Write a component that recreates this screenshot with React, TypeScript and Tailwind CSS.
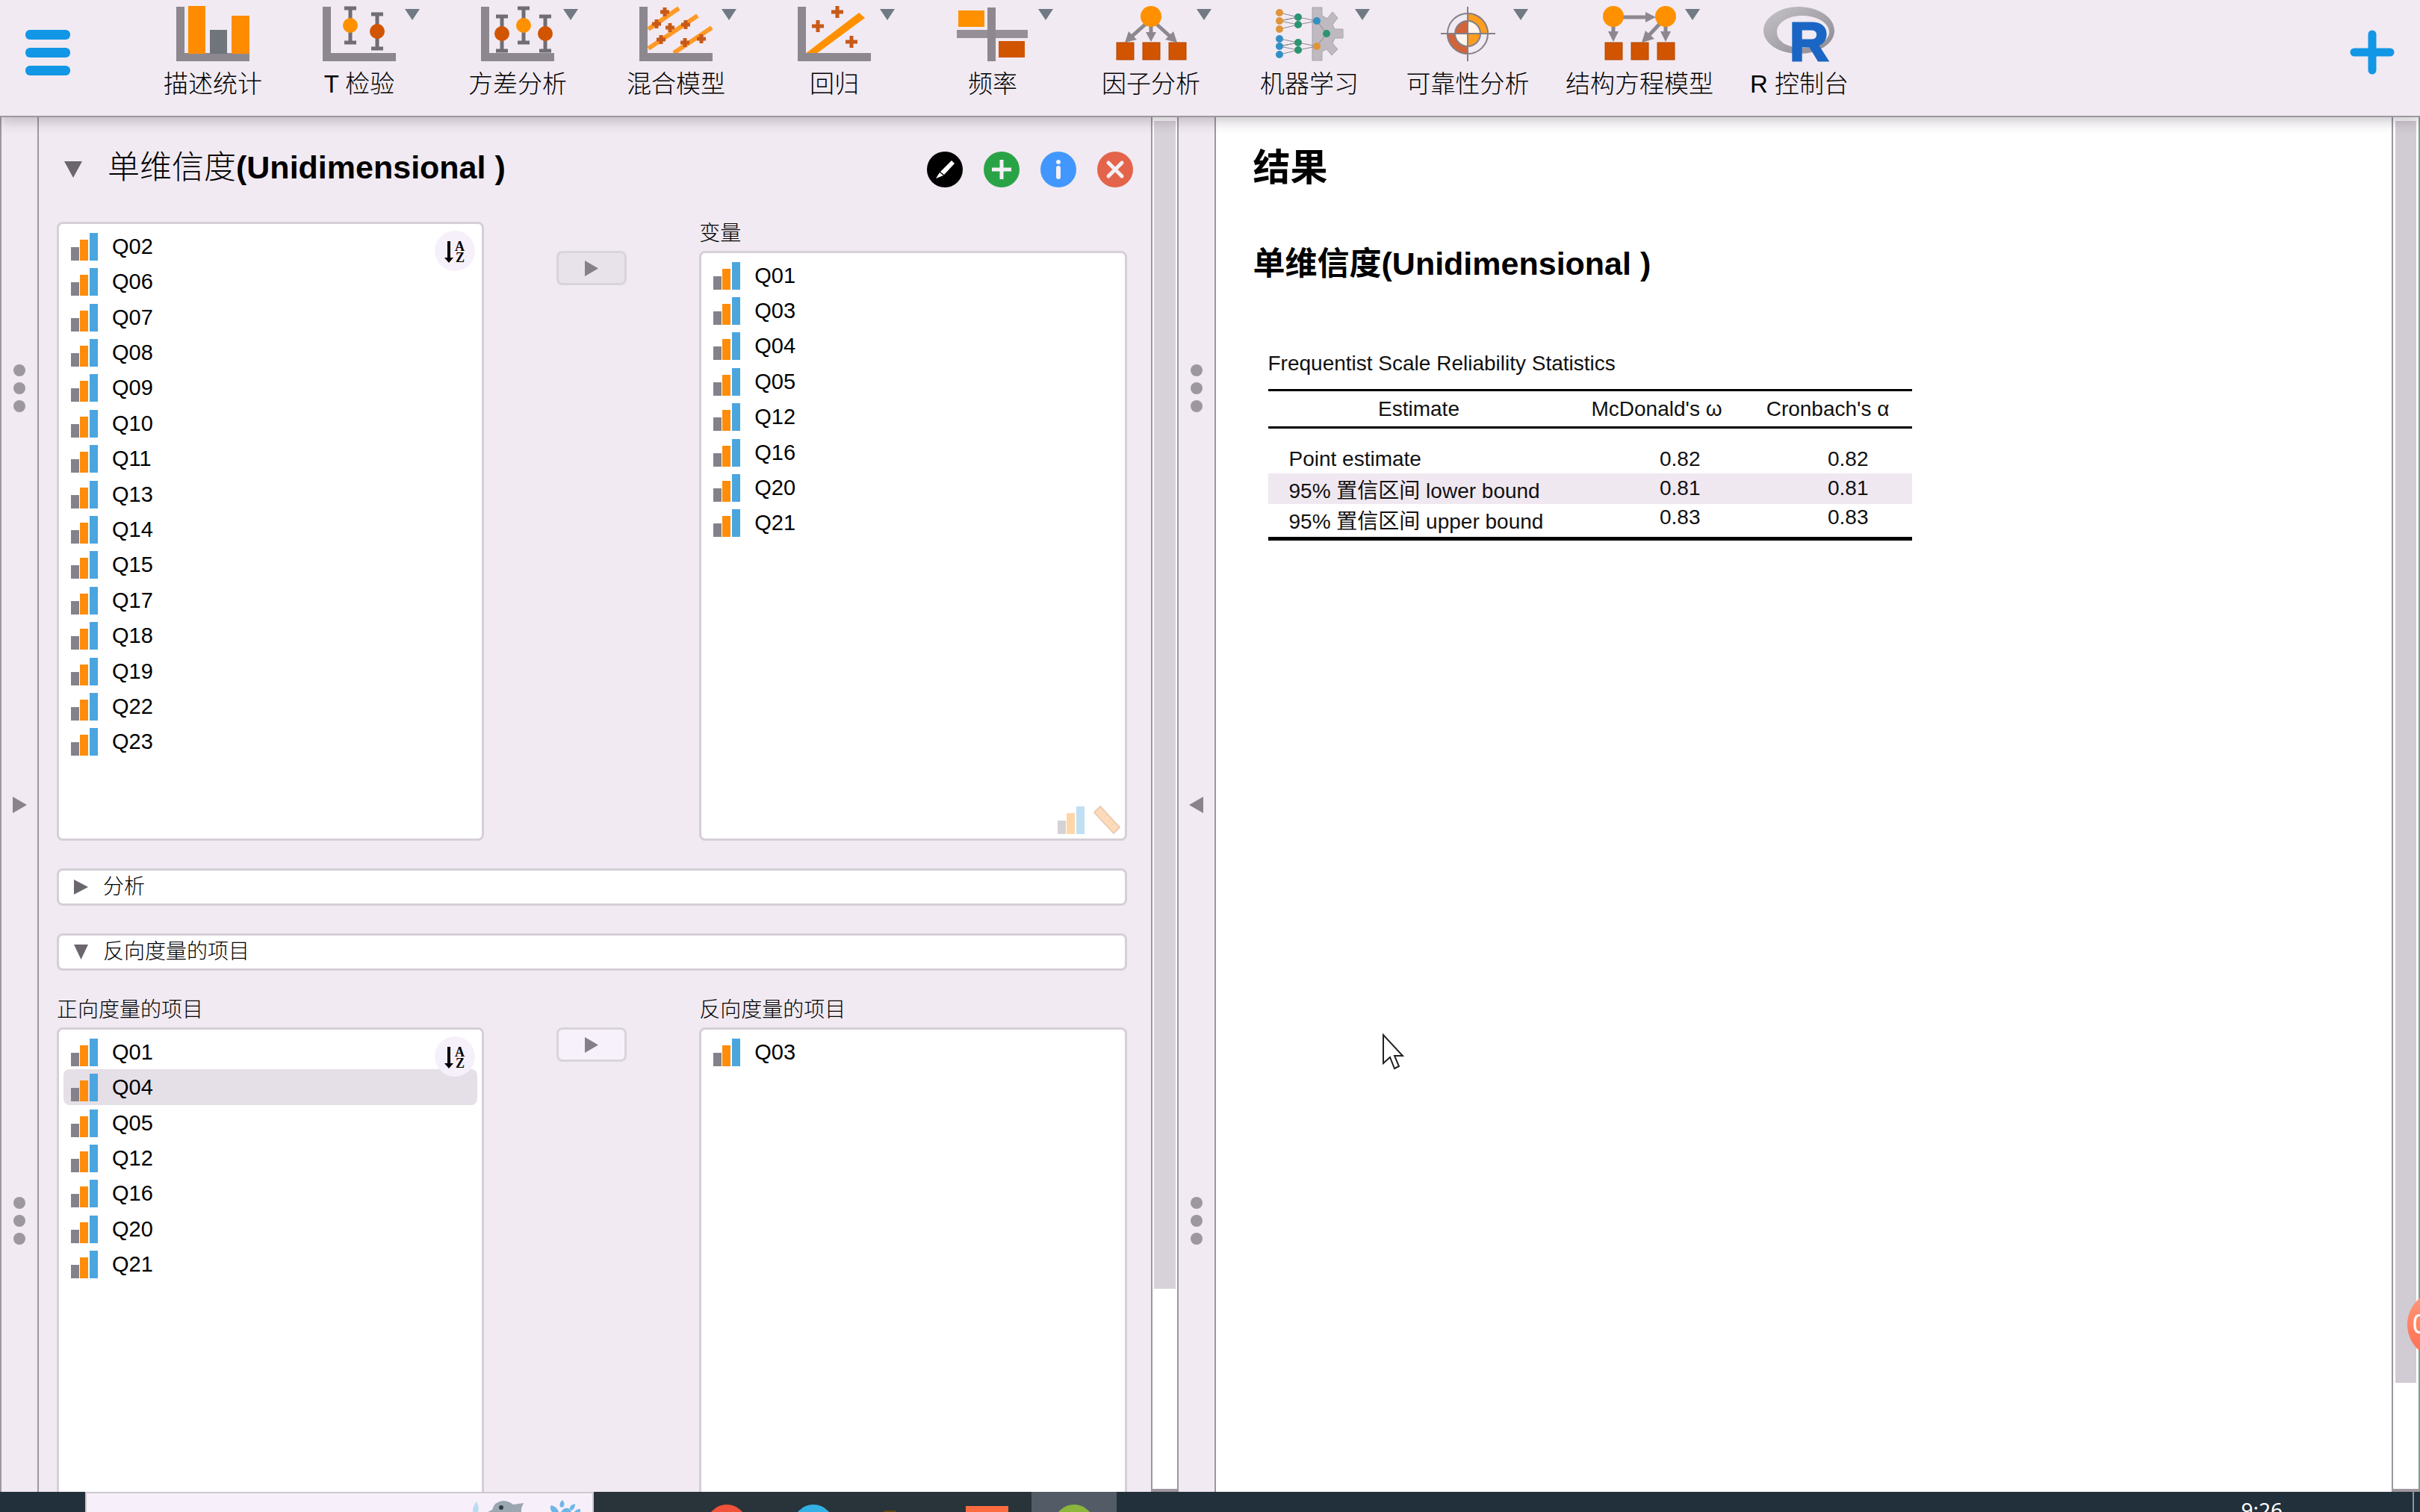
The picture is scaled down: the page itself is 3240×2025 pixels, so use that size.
import React from 'react';

const ORANGE = '#ff9100';
const RUST = '#d15400';
const GREY = '#8d888f';

const Axes = () => <path d="M0 1H11V63H98V74H0Z" fill={GREY} />;

const Whisker = ({ x, y, color }: { x: number; y: number; color: string }) => (
  <g>
    <path d={`M${x} ${y - 24}V${y + 24}M${x - 8} ${y - 23}h16M${x - 8} ${y + 23}h16`} stroke="#716d74" strokeWidth="5" fill="none" />
    <circle cx={x} cy={y} r="10" fill={color} />
  </g>
);

const Plus = ({ x, y, size = 7 }: { x: number; y: number; size?: number }) => (
  <path d={`M${x - size} ${y}h${size * 2}M${x} ${y - size}v${size * 2}`} stroke="#c85a18" strokeWidth="5" fill="none" />
);

const Boxes = () => (
  <g fill={RUST} stroke="#b34700" strokeWidth="1">
    <rect x="3" y="49" width="23" height="23" />
    <rect x="38" y="49" width="23" height="23" />
    <rect x="73" y="49" width="23" height="23" />
  </g>
);

const DescriptivesIcon = () => (
  <>
    <Axes />
    <rect x="16" y="0" width="23" height="64" fill="#ff8c00" />
    <rect x="45" y="32" width="23" height="32" fill="#70757c" />
    <rect x="74" y="13" width="24" height="51" fill="#ff8c00" />
  </>
);

const TTestIcon = () => (
  <>
    <Axes />
    <Whisker x={37} y={26} color={ORANGE} />
    <Whisker x={73} y={34} color={RUST} />
  </>
);

const AnovaIcon = () => (
  <>
    <Axes />
    <Whisker x={28} y={37} color={RUST} />
    <Whisker x={57} y={26} color={ORANGE} />
    <Whisker x={86} y={37} color={RUST} />
  </>
);

const MixedIcon = () => (
  <>
    <path d="M12 31L53 3M12 57L78 13M46 63L97 29" stroke="#ff9a26" strokeWidth="6" />
    <Plus x={34} y={8} size={6} />
    <Plus x={23} y={24} size={6} />
    <Plus x={41} y={29} size={6} />
    <Plus x={62} y={25} size={6} />
    <Plus x={29} y={45} size={6} />
    <Plus x={61} y={49} size={6} />
    <Plus x={83} y={44} size={6} />
    <Axes />
  </>
);

const RegressionIcon = () => (
  <>
    <path d="M10 64L82 9L90 16L25 64Z" fill={ORANGE} />
    <Axes />
    <Plus x={53} y={8} size={8} />
    <Plus x={27} y={27} size={8} />
    <Plus x={72} y={48} size={8} />
  </>
);

const FrequenciesIcon = () => (
  <>
    <path d="M1 32H96V43H1Z" fill="#968f97" />
    <path d="M42 2H53V74H42Z" fill={GREY} />
    <rect x="3" y="6" width="35" height="22" fill={ORANGE} />
    <rect x="57" y="47" width="35" height="22" fill={RUST} />
  </>
);

const FactorIcon = () => (
  <>
    <path d="M42 24L22 42M49 26V38M56 24L76 42" stroke={GREY} strokeWidth="5" />
    <path d="M14 49L19 34L30 45ZM49 48L42 35H56ZM84 49L68 45L79 34Z" fill={GREY} />
    <circle cx="49" cy="14" r="14" fill={ORANGE} />
    <Boxes />
  </>
);

const MachineLearningIcon = () => (
  <>
    <path
      d="M53 2H66V13L73 17L80 8L87 16L80 25L83 31H94V43H83L80 50L87 58L79 66L72 58L66 61V73H53Z"
      fill="#bfb9c0"
      stroke="#a8a2aa"
    />
    <path
      d="M9 9L34 15L9 20L34 25L9 31M9 20L34 15L59 20L34 25M9 44L34 49L9 54L34 59L9 65M9 54L34 49L59 54L34 59M59 20L72 37L59 54"
      stroke="#8d888f"
      strokeWidth="1"
      fill="none"
    />
    {[9, 20, 31].map((y) => <circle key={y} cx="9" cy={y} r="5" fill="#e0953a" />)}
    {[44, 54, 65].map((y) => <circle key={y} cx="9" cy={y} r="5" fill="#3390c4" />)}
    {[15, 25, 49, 59].map((y) => <circle key={y} cx="34" cy={y} r="5" fill="#2c9470" />)}
    <circle cx="59" cy="20" r="5" fill="#3390c4" />
    <circle cx="59" cy="54" r="5" fill="#e0953a" />
    <circle cx="72" cy="37" r="5" fill="#2c9470" />
  </>
);

const ReliabilityIcon = () => (
  <>
    <circle cx="49" cy="37" r="17" fill="#fff5ec" />
    <path d="M49 9A28 28 0 0 1 77 37H66A17 17 0 0 0 49 20Z" fill="#ff9d1e" />
    <path d="M49 37H66A17 17 0 0 1 49 54Z" fill="#ff9d1e" />
    <path d="M49 65A28 28 0 0 1 21 37H32A17 17 0 0 0 49 54Z" fill="#d2643a" />
    <path d="M49 37H32A17 17 0 0 1 49 20Z" fill="#d2643a" />
    <g fill="none" stroke="#857f87" strokeWidth="2">
      <circle cx="49" cy="37" r="27" />
      <circle cx="49" cy="37" r="17" />
      <path d="M13 37H86M49 1V74" />
    </g>
  </>
);

const SemIcon = () => (
  <>
    <path d="M27 15H60M14 26V38M84 26V38M76 24L61 40" stroke={GREY} strokeWidth="5" />
    <path d="M71 15L57 8V22ZM14 48L7 34H21ZM84 48L77 34H91ZM52 49L57 33L69 44Z" fill={GREY} />
    <circle cx="14" cy="14" r="14" fill={ORANGE} />
    <circle cx="84" cy="14" r="14" fill={ORANGE} />
    <Boxes />
  </>
);

const RConsoleIcon = () => (
  <>
    <defs>
      <linearGradient id="ring" x1="0" y1="0" x2="1" y2="1">
        <stop offset="0" stopColor="#c6c3c8" />
        <stop offset="1" stopColor="#8b8890" />
      </linearGradient>
    </defs>
    <path
      fillRule="evenodd"
      fill="url(#ring)"
      d="M48 1C74 1 96 15 96 33S74 64 48 64S1 50 1 33S22 1 48 1ZM53 13C34 13 19 22 19 35S34 56 53 56S89 47 89 35S73 13 53 13Z"
    />
    <text x="36" y="73" fontSize="72" fontWeight="700" fill="#1b66c4" stroke="#1b66c4" strokeWidth="3" fontFamily="Liberation Sans, sans-serif">R</text>
  </>
);

interface RibbonItem {
  label: string;
  Icon: React.ElementType;
  menu: boolean;
  width: string;
}

const ribbon: RibbonItem[] = [
  { label: '描述统计', Icon: DescriptivesIcon, menu: false, width: 'w-[180px]' },
  { label: 'T 检验', Icon: TTestIcon, menu: true, width: 'w-[212px]' },
  { label: '方差分析', Icon: AnovaIcon, menu: true, width: 'w-[212px]' },
  { label: '混合模型', Icon: MixedIcon, menu: true, width: 'w-[212px]' },
  { label: '回归', Icon: RegressionIcon, menu: true, width: 'w-[212px]' },
  { label: '频率', Icon: FrequenciesIcon, menu: true, width: 'w-[212px]' },
  { label: '因子分析', Icon: FactorIcon, menu: true, width: 'w-[212px]' },
  { label: '机器学习', Icon: MachineLearningIcon, menu: true, width: 'w-[212px]' },
  { label: '可靠性分析', Icon: ReliabilityIcon, menu: true, width: 'w-[212px]' },
  { label: '结构方程模型', Icon: SemIcon, menu: true, width: 'w-[248px]' },
  { label: 'R 控制台', Icon: RConsoleIcon, menu: false, width: 'w-[180px]' },
];

const Triangle = ({ dir, className }: { dir: 'down' | 'right' | 'left'; className: string }) => {
  const points = { down: '0,0 20,0 10,20', right: '0,0 20,10 0,20', left: '20,0 20,20 0,10' };
  return (
    <svg viewBox="0 0 20 20" preserveAspectRatio="none" className={className} fill="currentColor">
      <polygon points={points[dir]} />
    </svg>
  );
};

const Ribbon = () => (
  <header className="relative z-10 flex h-[157px] shrink-0 items-start border-b-2 border-[#9d97a0] bg-[#f1eaf2] shadow-[0_6px_16px_rgba(50,30,50,0.24)]">
    <button aria-label="Menu" className="mt-[40px] ml-[34px] flex w-[60px] flex-col gap-[11px]">
      <span className="h-[13px] rounded-md bg-[#1296e6]" />
      <span className="h-[13px] rounded-md bg-[#1296e6]" />
      <span className="h-[13px] rounded-md bg-[#1296e6]" />
    </button>
    <nav className="ml-[101px] flex pt-2">
      {ribbon.map(({ label, Icon, menu, width }) => (
        <button key={label} className={`flex shrink-0 flex-col items-center gap-[10px] ${width}`}>
          <span className={`flex items-start gap-3 ${menu ? 'pl-8' : ''}`}>
            <svg viewBox="0 0 98 75" className="h-[75px] w-[98px] overflow-visible">
              <Icon />
            </svg>
            {menu && <Triangle dir="down" className="mt-1 h-[15px] w-5 text-[#717985]" />}
          </span>
          <span className="text-[33px] leading-10 font-light whitespace-nowrap text-black">{label}</span>
        </button>
      ))}
    </nav>
    <button aria-label="Add module" className="mt-[40px] mr-[34px] ml-auto">
      <svg viewBox="0 0 60 60" className="size-[60px]">
        <path d="M30 6V54M6 30H54" stroke="#1296e6" strokeWidth="11" strokeLinecap="round" />
      </svg>
    </button>
  </header>
);

const Dots = () => (
  <span className="flex flex-col gap-2">
    <span className="size-4 rounded-full bg-[#9d97a0]" />
    <span className="size-4 rounded-full bg-[#9d97a0]" />
    <span className="size-4 rounded-full bg-[#9d97a0]" />
  </span>
);

const Splitter = ({ dir, className }: { dir: 'left' | 'right'; className: string }) => (
  <button aria-label="Resize panel" className={`flex shrink-0 flex-col items-center justify-between border-r-2 border-[#9d97a0] bg-[#f1eaf2] py-[331px] ${className}`}>
    <Dots />
    <Triangle dir={dir} className="h-[22px] w-[19px] text-[#8a838c]" />
    <Dots />
  </button>
);

const ScaleIcon = () => (
  <svg viewBox="0 0 36 38" className="h-[38px] w-9">
    <rect x="0" y="20" width="11" height="18" fill="#85818a" />
    <rect x="12" y="10" width="11" height="28" fill="#ff8c0a" />
    <rect x="25" y="1" width="11" height="37" fill="#4ba5df" />
  </svg>
);

const SortButton = () => (
  <button aria-label="Sort" className="absolute top-[9px] right-[9px] size-[54px] rounded-full bg-[#f6f0fb]">
    <svg viewBox="0 0 54 54" className="size-[54px]">
      <path d="M17 14h4v22h4l-6 7l-6-7h4z" fill="#000" />
      <g fontFamily="Liberation Serif, serif" fontSize="18" fontWeight="700">
        <text x="27" y="27">A</text>
        <text x="28" y="42">Z</text>
      </g>
    </svg>
  </button>
);

interface VariableListProps {
  label?: string;
  items: string[];
  height: string;
  selected?: string;
  sortable?: boolean;
  allowed?: boolean;
}

const VariableList: React.FC<VariableListProps> = ({ label, items, height, selected, sortable, allowed }) => (
  <div className="flex flex-1 flex-col">
    {label && <h3 className="mb-[7px] text-[28px] leading-8 font-light text-black">{label}</h3>}
    <div className="relative flex-1 rounded-lg border-3 border-[#d5cfd7] bg-white p-[6px]">
      <ul className={`flex flex-col ${height}`}>
        {items.map((item) => (
          <li
            key={item}
            className={`flex flex-1 items-center gap-[19px] rounded-lg pl-[10px] ${item === selected ? 'bg-[#e5dfe7]' : ''}`}
          >
            <ScaleIcon />
            <span className="text-[29px] leading-8 text-black">{item}</span>
          </li>
        ))}
      </ul>
      {sortable && <SortButton />}
      {allowed && (
        <div className="absolute right-[6px] bottom-[6px] flex gap-3 opacity-35">
          <ScaleIcon />
          <svg viewBox="0 0 36 38" className="h-[38px] w-9">
            <path d="M9 1L35 29L27 37L1 9Z" fill="#ff9a3c" stroke="#c87428" strokeWidth="2" />
            <path d="M13 7l-4 4M18 12l-4 4M23 17l-4 4M28 23l-4 4" stroke="#c87428" strokeWidth="1" />
          </svg>
        </div>
      )}
    </div>
  </div>
);

const AssignButton = ({ disabled }: { disabled?: boolean }) => (
  <div className="flex w-[288px] shrink-0 items-start justify-center pt-[39px]">
    <button
      aria-label="Assign"
      disabled={disabled}
      className="flex h-[46px] w-[94px] items-center justify-center rounded-lg border-3 border-[#d9d3db] bg-[#f7f1fb] disabled:bg-[#e8e2ea]"
    >
      <Triangle dir="right" className="h-[21px] w-[18px] text-[#857f87]" />
    </button>
  </div>
);

const Section = ({ title, open }: { title: string; open?: boolean }) => (
  <button aria-expanded={!!open} className="flex h-[50px] shrink-0 items-center gap-5 rounded-lg border-3 border-[#d5cfd7] bg-white pl-5">
    <Triangle dir={open ? 'down' : 'right'} className="h-5 w-[19px] text-[#6b666d]" />
    <span className="text-[28px] leading-8 font-light text-black">{title}</span>
  </button>
);

const Actions = () => (
  <div className="flex gap-7">
    <button aria-label="Edit title">
      <svg viewBox="0 0 48 48" className="size-12">
        <circle cx="24" cy="24" r="24" fill="#000" />
        <path d="M33 12l4 4L23 31l-5-4zM17 28l5 4l-10 4z" fill="#fff" />
      </svg>
    </button>
    <button aria-label="Duplicate">
      <svg viewBox="0 0 48 48" className="size-12">
        <circle cx="24" cy="24" r="24" fill="#2aa347" />
        <path d="M24 11V37M11 24H37" stroke="#f4eff5" strokeWidth="5" />
      </svg>
    </button>
    <button aria-label="Information">
      <svg viewBox="0 0 48 48" className="size-12">
        <circle cx="24" cy="24" r="24" fill="#4197fd" />
        <circle cx="24" cy="14" r="3" fill="#f4eff5" />
        <path d="M24 22V34" stroke="#f4eff5" strokeWidth="6" strokeLinecap="round" />
      </svg>
    </button>
    <button aria-label="Remove">
      <svg viewBox="0 0 48 48" className="size-12">
        <circle cx="24" cy="24" r="24" fill="#e3644b" />
        <path d="M15 15L33 33M33 15L15 33" stroke="#f4eff5" strokeWidth="5" strokeLinecap="round" />
      </svg>
    </button>
  </div>
);

const available = ['Q02', 'Q06', 'Q07', 'Q08', 'Q09', 'Q10', 'Q11', 'Q13', 'Q14', 'Q15', 'Q17', 'Q18', 'Q19', 'Q22', 'Q23'];
const assigned = ['Q01', 'Q03', 'Q04', 'Q05', 'Q12', 'Q16', 'Q20', 'Q21'];
const normalItems = ['Q01', 'Q04', 'Q05', 'Q12', 'Q16', 'Q20', 'Q21'];

const AnalysisForm = () => (
  <section className="flex min-w-0 flex-[1489] flex-col overflow-hidden bg-[#f1eaf2]">
    <div className="flex h-[140px] shrink-0 items-center pr-6 pl-[34px]">
      <button aria-label="Collapse">
        <Triangle dir="down" className="h-[22px] w-6 text-[#6b666d]" />
      </button>
      <h1 className="ml-[34px] flex-1 pb-[6px] text-[43px] leading-[52px] font-light text-black">
        单维信度<span className="font-bold">(Unidimensional )</span>
      </h1>
      <Actions />
    </div>
    <div className="flex min-h-0 flex-1 flex-col gap-[37px] pr-8 pl-6">
      <div className="flex h-[829px] shrink-0">
        <VariableList items={available} height="h-[711px]" sortable />
        <AssignButton disabled />
        <VariableList label="变量" items={assigned} height="h-[379px]" allowed />
      </div>
      <Section title="分析" />
      <Section title="反向度量的项目" open />
      <div className="-mb-3 flex flex-1">
        <VariableList label="正向度量的项目" items={normalItems} height="h-[332px]" selected="Q04" sortable />
        <AssignButton />
        <VariableList label="反向度量的项目" items={['Q03']} height="h-[47px]" />
      </div>
    </div>
  </section>
);

const rows = [
  { name: 'Point estimate', omega: '0.82', alpha: '0.82', head: 'h-[61px] pt-[22px]', cell: 'h-[61px] pt-[22px]', shade: '' },
  { name: '95% 置信区间 lower bound', omega: '0.81', alpha: '0.81', head: 'h-[41px] pt-2', cell: 'h-[41px]', shade: 'bg-[#f0e8f1]' },
  { name: '95% 置信区间 upper bound', omega: '0.83', alpha: '0.83', head: 'h-[46px] pt-2 pb-1', cell: 'h-[46px] pb-2', shade: '' },
];

const Results = () => (
  <main className="min-w-0 flex-[1575] bg-white text-black">
    <div className="px-[50px] pt-[38px]">
      <h1 className="text-[50px] leading-[60px] font-bold">结果</h1>
      <h2 className="mt-[72px] text-[43px] leading-[52px] font-bold">单维信度(Unidimensional )</h2>
      <table className="mt-[92px] ml-5 w-[862px] table-fixed border-collapse text-[28px] leading-8 text-[#111]">
        <caption className="pb-[18px] text-left">Frequentist Scale Reliability Statistics</caption>
        <thead>
          <tr className="h-[50px] border-y-3 border-black">
            <th scope="col" className="w-[404px] font-normal">Estimate</th>
            <th scope="col" className="w-[233px] font-normal">McDonald's ω</th>
            <th scope="col" className="font-normal">Cronbach's α</th>
          </tr>
        </thead>
        <tbody className="border-b-5 border-black">
          {rows.map((row) => (
            <tr key={row.name} className={row.shade}>
              <th scope="row" className={`pl-7 text-left font-normal whitespace-nowrap ${row.head}`}>{row.name}</th>
              <td className={`pr-[58px] text-right ${row.cell}`}>{row.omega}</td>
              <td className={`pr-[58px] text-right ${row.cell}`}>{row.alpha}</td>
            </tr>
          ))}
        </tbody>
      </table>
    </div>
  </main>
);

const Taskbar = () => (
  <footer className="flex h-[27px] shrink-0 items-start overflow-hidden bg-[#22303b]">
    <div className="ml-[114px] flex h-[40px] w-[681px] shrink-0 justify-end border-2 border-[#cfc9d1] bg-[#f7eff9]">
      <svg viewBox="0 0 160 25" className="h-[25px] w-[160px]">
        <path d="M0 25q0-8 5-14q4 8 2 14z" fill="#b9dcf2" />
        <path d="M20 25l6-3q3-11 14-12q8 0 14 5l14-2q-4 8-3 12z" fill="#9aa7b1" />
        <circle cx="38" cy="19" r="3" fill="#33393f" />
        <path d="M106 25q-4-5-1-9q8 2 10 9zM117 18q-2-5 3-9q5 6 0 10zM130 21q-1-5 7-7q0 7-5 9zM118 25q5-8 12-4l2 4zM136 25q2-4 8-4v4z" fill="#6fb6e8" />
      </svg>
    </div>
    <svg viewBox="0 0 586 27" className="h-[27px] w-[586px] shrink-0">
      <rect width="586" height="27" fill="#28343a" />
      <circle cx="178" cy="44" r="27" fill="#f0523a" />
      <circle cx="294" cy="44" r="27" fill="#34b1e4" />
      <rect x="388" y="25" width="17" height="2" fill="#5c4410" />
      <rect x="498" y="19" width="57" height="8" fill="#fd6c40" />
    </svg>
    <div className="h-[27px] w-[114px] bg-[#525b66]">
      <svg viewBox="0 0 114 27" className="h-[27px] w-[114px]">
        <circle cx="57" cy="44" r="27" fill="#8cb53c" />
      </svg>
    </div>
    <time className="mt-2 ml-auto pr-[174px] font-['Noto_Sans','Noto_Sans_CJK_SC',sans-serif] text-[28px] leading-8 text-white">9:26</time>
    <span className="mr-2 h-[27px] w-[2px] bg-[#8d959c]" />
  </footer>
);

const App: React.FC = () => (
  <div className="relative flex h-screen flex-col overflow-hidden bg-[#f1eaf2] font-['Liberation_Sans','Noto_Sans_CJK_SC',sans-serif]">
    <Ribbon />
    <div className="flex min-h-0 flex-1">
      <Splitter dir="right" className="w-[52px] border-l-2" />
      <AnalysisForm />
      <div className="w-[37px] shrink-0 overflow-hidden border-x-2 border-b-4 border-[#9d97a0] bg-white px-[2px] pt-[5px]">
        <div className="h-[1564px] bg-[#d7d1d9]" />
      </div>
      <Splitter dir="left" className="w-[50px]" />
      <Results />
      <div className="w-9 shrink-0 border-b-4 border-l-2 border-[#9d97a0] bg-white px-[3px] pt-[5px]">
        <div className="h-[1690px] bg-[#d1cbd3]" />
      </div>
      <div className="w-[2px] shrink-0 bg-[#7fa083]" />
    </div>
    <Taskbar />

    {/* recorder bubble docked on the right edge */}
    <button className="absolute top-[1728px] -right-[75px] flex size-[92px] items-center rounded-full bg-gradient-to-b from-[#ff9a7c] to-[#ff6a4d] pl-[7px] text-[36px] text-white">
      0
    </button>

    <svg viewBox="0 0 30 50" className="pointer-events-none absolute top-[1384px] left-[1850px] h-[50px] w-[30px]">
      <path d="M2 2V40L11 32L17 47L23 44L17 30H28Z" fill="#fff" stroke="#222" strokeWidth="2" />
    </svg>
  </div>
);

export default App;
